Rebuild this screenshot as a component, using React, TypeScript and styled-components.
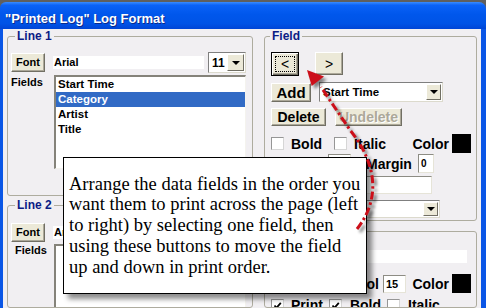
import styled, { createGlobalStyle } from "styled-components";

const UI = `"Liberation Sans", Arial, sans-serif`;

const GlobalStyle = createGlobalStyle`
  html, body {
    margin: 0;
    padding: 0;
    background: #5f5f5f;
  }
  body {
    font-family: ${UI};
  }
`;

const Style = {
  Window: styled.div`
    position: relative;
    width: 486px;
    height: 308px;
    overflow: hidden;
    display: flex;
    flex-direction: column;
    background: #5f5f5f;
  `,
  TitleBar: styled.div`
    flex: 0 0 27px;
    margin-top: 2px;
    box-sizing: border-box;
    padding: 6px 0 0 5px;
    display: flex;
    align-items: center;
    border-radius: 6px 7px 0 0;
    background: linear-gradient(
      180deg,
      #3a8cff 0%,
      #0b62f7 12%,
      #0057ec 45%,
      #0053e6 80%,
      #0045d6 100%
    );
    color: #fff;
    font: bold 13px ${UI};
    text-shadow: 1px 1px 0 #0c2a8a;
    white-space: nowrap;
  `,
  Frame: styled.div`
    flex: 1;
    min-height: 0;
    display: flex;
    padding: 0 5px 0 3px;
    background: #0a56e6;
  `,
  Body: styled.div`
    flex: 1;
    min-width: 0;
    display: flex;
    gap: 11px;
    padding: 0 4px;
    background: #f1eff2;
  `,
  Column: styled.div<{ $w: number }>`
    width: ${(p) => p.$w}px;
    flex: 0 0 ${(p) => p.$w}px;
    display: flex;
    flex-direction: column;
  `,
  Group: styled.fieldset<{ $h?: number; $top?: number; $pl: number; $pt: number }>`
    box-sizing: border-box;
    margin: ${(p) => p.$top ?? 0}px 0 0 0;
    padding: ${(p) => p.$pt}px 5px 0 ${(p) => p.$pl}px;
    min-width: 0;
    border: 1px solid #aeac9f;
    border-radius: 3px;
    ${(p) => (p.$h ? `height: ${p.$h}px;` : "flex: 1;")}
    overflow: hidden;
  `,
  Legend: styled.legend<{ $ml: number }>`
    margin-left: ${(p) => p.$ml}px;
    padding: 0 2px;
    min-height: 13px;
    line-height: 13px;
    font: bold 12px ${UI};
    color: #0b1c85;
  `,
  Row: styled.div<{ $top?: number; $h?: number; $align?: string }>`
    display: flex;
    align-items: ${(p) => p.$align ?? "center"};
    margin-top: ${(p) => p.$top ?? 0}px;
    ${(p) => (p.$h ? `height: ${p.$h}px;` : "")}
  `,
  Btn: styled.button<{ $w: number; $h: number; $size?: number; $weight?: string; $ml?: number; $focus?: boolean }>`
    position: relative;
    box-sizing: border-box;
    flex: 0 0 auto;
    width: ${(p) => p.$w}px;
    height: ${(p) => p.$h}px;
    margin: 0 0 0 ${(p) => p.$ml ?? 0}px;
    padding: 0;
    background: #ece9d8;
    border: 1px solid;
    border-color: ${(p) => (p.$focus ? "#000" : "#fff #716f64 #716f64 #fff")};
    box-shadow: ${(p) =>
      p.$focus
        ? "inset 1px 1px 0 #fff, inset -1px -1px 0 #716f64, inset -2px -2px 0 #aca899"
        : "inset -1px -1px 0 #aca899"};
    font: ${(p) => p.$weight ?? "bold"} ${(p) => p.$size ?? 14}px ${UI};
    color: #000;
    line-height: 1;

    &:disabled {
      color: #aca899;
      text-shadow: 1px 1px 0 #fff;
    }

    ${(p) =>
      p.$focus
        ? `&::after {
            content: "";
            position: absolute;
            inset: 3px;
            border: 1px dotted #000;
          }`
        : ""}
  `,
  Flat: styled.div<{ $w: number; $ml?: number }>`
    box-sizing: border-box;
    width: ${(p) => p.$w}px;
    height: 13px;
    margin-left: ${(p) => p.$ml ?? 0}px;
    padding-left: 1px;
    background: #fff;
    font: bold 11px/13px ${UI};
    white-space: nowrap;
    overflow: hidden;
  `,
  Combo: styled.div<{ $w: number; $h: number; $ml?: number }>`
    box-sizing: border-box;
    display: flex;
    flex: 0 0 auto;
    width: ${(p) => p.$w}px;
    height: ${(p) => p.$h}px;
    margin-left: ${(p) => p.$ml ?? 0}px;
    padding: 1px;
    background: #fff;
    border: 1px solid;
    border-color: #7f7f7f #dcdacd #dcdacd #7f7f7f;
  `,
  ComboText: styled.div<{ $size?: number }>`
    flex: 1;
    display: flex;
    align-items: center;
    padding-left: 2px;
    font: bold ${(p) => p.$size ?? 11.5}px ${UI};
    white-space: nowrap;
    overflow: hidden;
  `,
  ComboArrow: styled.div<{ $w?: number }>`
    box-sizing: border-box;
    width: ${(p) => p.$w ?? 15}px;
    display: flex;
    align-items: center;
    justify-content: center;
    background: #ece9d8;
    border: 1px solid;
    border-color: #fff #716f64 #716f64 #fff;

    &::before {
      content: "";
      border-left: 4px solid transparent;
      border-right: 4px solid transparent;
      border-top: 4px solid #000;
    }
  `,
  SmallLabel: styled.div<{ $w: number; $pl?: number; $pt?: number }>`
    box-sizing: border-box;
    width: ${(p) => p.$w}px;
    flex: 0 0 auto;
    padding: ${(p) => p.$pt ?? 0}px 0 0 ${(p) => p.$pl ?? 0}px;
    font: bold 11px/13px ${UI};
  `,
  List: styled.div<{ $w: number; $h: number }>`
    box-sizing: border-box;
    width: ${(p) => p.$w}px;
    height: ${(p) => p.$h}px;
    background: #fff;
    border-style: solid;
    border-width: 2px 1px 1px 2px;
    border-color: #85837a #f4f3ee #f4f3ee #85837a;
  `,
  ListItem: styled.div<{ $sel?: boolean }>`
    height: 15px;
    padding-left: 2px;
    font: bold 11.5px/15px ${UI};
    color: ${(p) => (p.$sel ? "#fff" : "#000")};
    background: ${(p) => (p.$sel ? "#316ac5" : "transparent")};
    white-space: nowrap;
  `,
  Label: styled.span<{ $ml?: number; $w?: number; $right?: boolean; $auto?: boolean }>`
    flex: 0 0 auto;
    ${(p) => (p.$w ? `width: ${p.$w}px;` : "")}
    margin-left: ${(p) => (p.$auto ? "auto" : `${p.$ml ?? 0}px`)};
    text-align: ${(p) => (p.$right ? "right" : "left")};
    font: bold 14px ${UI};
    white-space: nowrap;
  `,
  Spacer: styled.span<{ $w: number }>`
    flex: 0 0 ${(p) => p.$w}px;
  `,
  Check: styled.span<{ $ml?: number }>`
    box-sizing: border-box;
    flex: 0 0 13px;
    width: 13px;
    height: 13px;
    margin-left: ${(p) => p.$ml ?? 0}px;
    display: flex;
    align-items: center;
    justify-content: center;
    background: #fff;
    border: 1px solid;
    border-color: #969696 #d6d6d6 #d6d6d6 #969696;
  `,
  Box: styled.div<{ $w: number; $h: number; $ml?: number; $size?: number }>`
    box-sizing: border-box;
    flex: 0 0 auto;
    width: ${(p) => p.$w}px;
    height: ${(p) => p.$h}px;
    margin-left: ${(p) => p.$ml ?? 0}px;
    padding-left: 2px;
    display: flex;
    align-items: center;
    background: #fff;
    border: 1px solid;
    border-color: #8d8c84 #e6e4d8 #e6e4d8 #8d8c84;
    font: bold ${(p) => p.$size ?? 11}px ${UI};
  `,
  Swatch: styled.div<{ $ml?: number }>`
    flex: 0 0 19px;
    width: 19px;
    height: 19px;
    margin-left: ${(p) => p.$ml ?? 0}px;
    background: #000;
  `,
  Callout: styled.div`
    position: absolute;
    left: 63px;
    top: 157px;
    box-sizing: border-box;
    width: 304px;
    height: 137px;
    padding: 0 4px 0 5px;
    display: flex;
    flex-direction: column;
    justify-content: center;
    background: #fff;
    border: 1px solid #000;
    box-shadow: 5px 5px 5px rgba(0, 0, 0, 0.45);
    font: 18.5px/20.8px "Liberation Serif", "Times New Roman", serif;
    color: #000;
  `,
  CalloutLine: styled.div`
    white-space: nowrap;
  `,
  Overlay: styled.svg`
    position: absolute;
    left: 0;
    top: 0;
    pointer-events: none;
  `,
};

function CheckMark() {
  return (
    <svg width="9" height="9" viewBox="0 0 9 9">
      <polyline points="1.5,4.5 3.5,6.8 7.8,1.8" fill="none" stroke="#000" strokeWidth="1.8" />
    </svg>
  );
}

const arrowPath = "M357 229 C380 200, 378 165, 350 130 L321 87";

export default function App() {
  return (
    <>
      <GlobalStyle />
      <Style.Window>
        <Style.TitleBar>"Printed Log" Log Format</Style.TitleBar>
        <Style.Frame>
          <Style.Body>
            <Style.Column $w={246}>
              <Style.Group $h={167} $pl={3} $pt={9}>
                <Style.Legend $ml={4}>Line 1</Style.Legend>
                <Style.Row $h={21}>
                  <Style.Btn $w={34} $h={19} $size={11}>Font</Style.Btn>
                  <Style.Flat $w={151} $ml={8}>Arial</Style.Flat>
                  <Style.Combo $w={38} $h={21} $ml={4}>
                    <Style.ComboText $size={12}>11</Style.ComboText>
                    <Style.ComboArrow $w={17} />
                  </Style.Combo>
                </Style.Row>
                <Style.Row $top={2} $align="flex-start">
                  <Style.SmallLabel $w={43} $pt={1}>Fields</Style.SmallLabel>
                  <Style.List $w={192} $h={94}>
                    <Style.ListItem>Start Time</Style.ListItem>
                    <Style.ListItem $sel>Category</Style.ListItem>
                    <Style.ListItem>Artist</Style.ListItem>
                    <Style.ListItem>Title</Style.ListItem>
                  </Style.List>
                </Style.Row>
              </Style.Group>

              <Style.Group $top={2} $pl={3} $pt={10}>
                <Style.Legend $ml={4}>Line 2</Style.Legend>
                <Style.Row $h={21}>
                  <Style.Btn $w={34} $h={19} $size={11}>Font</Style.Btn>
                  <Style.Flat $w={151} $ml={8}>Ar</Style.Flat>
                  <Style.Combo $w={38} $h={21} $ml={4}>
                    <Style.ComboText $size={12} />
                    <Style.ComboArrow $w={17} />
                  </Style.Combo>
                </Style.Row>
                <Style.Row $top={1} $align="flex-start">
                  <Style.SmallLabel $w={43} $pl={4}>Fields</Style.SmallLabel>
                  <Style.List $w={192} $h={90} />
                </Style.Row>
              </Style.Group>
            </Style.Column>

            <Style.Column $w={213}>
              <Style.Group $h={192} $pl={6} $pt={9}>
                <Style.Legend $ml={-1}>Field</Style.Legend>
                <Style.Row $align="flex-start">
                  <Style.Btn $w={28} $h={24} $weight="normal" $focus>
                    &lt;
                  </Style.Btn>
                  <Style.Btn $w={28} $h={23} $weight="normal" $ml={16}>
                    &gt;
                  </Style.Btn>
                </Style.Row>
                <Style.Row $top={6}>
                  <Style.Btn $w={40} $h={19} $size={15}>Add</Style.Btn>
                  <Style.Combo $w={124} $h={20} $ml={8}>
                    <Style.ComboText>Start Time</Style.ComboText>
                    <Style.ComboArrow />
                  </Style.Combo>
                </Style.Row>
                <Style.Row $top={6}>
                  <Style.Btn $w={55} $h={18}>Delete</Style.Btn>
                  <Style.Btn $w={67} $h={18} $ml={9} disabled>
                    Undelete
                  </Style.Btn>
                </Style.Row>
                <Style.Row $top={8} $h={19}>
                  <Style.Check />
                  <Style.Label $ml={7}>Bold</Style.Label>
                  <Style.Check $ml={12} />
                  <Style.Label $ml={7}>Italic</Style.Label>
                  <Style.Label $auto>Color</Style.Label>
                  <Style.Swatch $ml={3} />
                </Style.Row>
                <Style.Row $top={1} $h={19}>
                  <Style.Label $w={57}>Co</Style.Label>
                  <Style.Box $w={23} $h={19} />
                  <Style.Label $ml={15}>Margin</Style.Label>
                  <Style.Box $w={16} $h={19} $ml={6} $size={10}>0</Style.Box>
                </Style.Row>
                <Style.Row $top={3} $h={18}>
                  <Style.Spacer $w={57} />
                  <Style.Box $w={104} $h={18} />
                </Style.Row>
                <Style.Row $top={6} $h={18}>
                  <Style.Spacer $w={57} />
                  <Style.Combo $w={112} $h={18}>
                    <Style.ComboText />
                    <Style.ComboArrow />
                  </Style.Combo>
                </Style.Row>
              </Style.Group>

              <Style.Group $top={4} $pl={6} $pt={9}>
                <Style.Legend $ml={-1} />
                <Style.Row $h={19}>
                  <Style.Spacer $w={44} />
                  <Style.Flat $w={152} />
                </Style.Row>
                <Style.Row $top={8} $h={19}>
                  <Style.Label $w={108} $right>Col</Style.Label>
                  <Style.Box $w={23} $h={18} $ml={4}>15</Style.Box>
                  <Style.Label $auto>Color</Style.Label>
                  <Style.Swatch $ml={3} />
                </Style.Row>
                <Style.Row $top={4} $h={16}>
                  <Style.Check>
                    <CheckMark />
                  </Style.Check>
                  <Style.Label $ml={7}>Print</Style.Label>
                  <Style.Check $ml={6}>
                    <CheckMark />
                  </Style.Check>
                  <Style.Label $ml={8}>Bold</Style.Label>
                  <Style.Check $ml={6} />
                  <Style.Label $ml={8}>Italic</Style.Label>
                </Style.Row>
              </Style.Group>
            </Style.Column>
          </Style.Body>
        </Style.Frame>

        <Style.Callout>
          <Style.CalloutLine>Arrange the data fields in the order you</Style.CalloutLine>
          <Style.CalloutLine>want them to print across the page (left</Style.CalloutLine>
          <Style.CalloutLine>to right) by selecting one field, then</Style.CalloutLine>
          <Style.CalloutLine>using these buttons to move the field</Style.CalloutLine>
          <Style.CalloutLine>up and down in print order.</Style.CalloutLine>
        </Style.Callout>

        <Style.Overlay width="486" height="308" viewBox="0 0 486 308">
          <defs>
            <filter id="soft" x="-20%" y="-20%" width="140%" height="140%">
              <feGaussianBlur stdDeviation="1.4" />
            </filter>
          </defs>
          <g transform="translate(3 3)" filter="url(#soft)" opacity="0.45">
            <path d={arrowPath} fill="none" stroke="#000" strokeWidth="3" strokeDasharray="8 3 2.5 3" />
            <polygon points="307,70 311.7,86 324,76.5" fill="#000" />
          </g>
          <path
            d={arrowPath}
            fill="none"
            stroke="#cc0f1a"
            strokeWidth="3"
            strokeDasharray="8 3 2.5 3"
          />
          <polygon points="307,70 311.7,86 324,76.5" fill="#cc0f1a" />
        </Style.Overlay>
      </Style.Window>
    </>
  );
}
